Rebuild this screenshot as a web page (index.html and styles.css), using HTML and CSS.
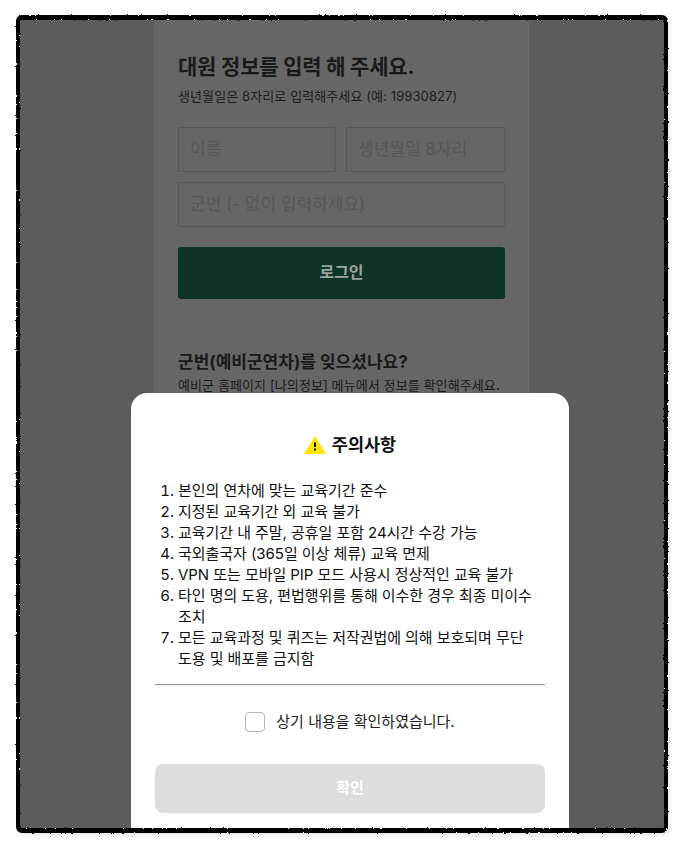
FILE: index.html
```html
<!DOCTYPE html>
<html lang="ko">
<head>
<meta charset="utf-8">
<title>대원 정보 입력</title>
<link rel="stylesheet" href="styles.css">
</head>
<body>
<svg class="defs" width="0" height="0" aria-hidden="true"><filter id="rough" x="-2%" y="-2%" width="104%" height="104%"><feTurbulence type="fractalNoise" baseFrequency="0.45" numOctaves="2" seed="4"/><feDisplacementMap in="SourceGraphic" scale="2.4"/></filter></svg>
<div class="frame">
  <div class="viewport">
    <div class="page">
      <main class="panel">
        <h1 class="title">대원 정보를 입력 해 주세요.</h1>
        <p class="sub">생년월일은 8자리로 입력해주세요 (예: 19930827)</p>
        <div class="row">
          <div class="field">이름</div>
          <div class="field">생년월일 8자리</div>
        </div>
        <div class="field wide">군번 (- 없이 입력하세요)</div>
        <div class="login">로그인</div>
        <h2 class="forgot">군번(예비군연차)를 잊으셨나요?</h2>
        <p class="sub small">예비군 홈페이지 [나의정보] 메뉴에서 정보를 확인해주세요.</p>
      </main>
    </div>
    <section class="modal">
      <h3 class="modal-title">
        <svg class="warn" width="22" height="18" viewBox="0 0 22 18"><path d="M11 0 22 18H0Z" fill="#ffe600"/><rect x="10" y="6.5" width="2" height="4.5" fill="#111"/><rect x="10" y="12.5" width="2" height="2" fill="#111"/></svg>
        <span>주의사항</span>
      </h3>
      <ol class="rules">
        <li>본인의 연차에 맞는 교육기간 준수</li>
        <li>지정된 교육기간 외 교육 불가</li>
        <li>교육기간 내 주말, 공휴일 포함 24시간 수강 가능</li>
        <li>국외출국자 (365일 이상 체류) 교육 면제</li>
        <li>VPN 또는 모바일 PIP 모드 사용시 정상적인 교육 불가</li>
        <li>타인 명의 도용, 편법행위를 통해 이수한 경우 최종 미이수 조치</li>
        <li>모든 교육과정 및 퀴즈는 저작권법에 의해 보호되며 무단 도용 및 배포를 금지함</li>
      </ol>
      <hr class="divider">
      <div class="check-row"><span class="check"></span><span>상기 내용을 확인하였습니다.</span></div>
      <div class="confirm">확인</div>
    </section>
  </div>
</div>
</body>
</html>
```
FILE: styles.css
```css
* { box-sizing: border-box; }
html, body { margin: 0; height: 100%; }
body {
  background: #fff;
  font-family: "Inter", "Noto Sans CJK KR", sans-serif;
  padding: 15px 15px 15px 16px;
  color: #111;
  overflow: hidden;
}
.defs { position: absolute; }
.frame {
  position: relative;
  width: 652px;
  height: 818px;
  padding: 5px 4px;
  box-shadow: 2px 3px 3px #eee;
  border-radius: 6px;
}
.frame::after {
  content: "";
  position: absolute;
  inset: 0;
  border: solid #000;
  border-width: 5px 4px;
  border-radius: 6px;
  filter: url(#rough);
  pointer-events: none;
}
.viewport {
  position: relative;
  height: 100%;
  overflow: hidden;
}
.page {
  height: 100%;
  background: #5c5c5c;
  display: flex;
  justify-content: center;
}
.panel {
  width: 375px;
  height: 100%;
  margin-left: -1px;
  background: #666;
  padding: 32px 24px 0;
  color: #1d1d1d;
}
.title { margin: 0; font-size: 21px; line-height: 29px; font-weight: 700; letter-spacing: -0.2px; color: #1a1a1a; }
.sub { margin: 6px 0 0; font-size: 13px; line-height: 19px; letter-spacing: 0.1px; color: #1c1c1c; }
.sub.small { margin-top: 1px; }
.row { display: grid; grid-template-columns: 158px 159px; gap: 10px; margin-top: 21px; }
.field {
  height: 45px;
  border: 1px solid #585858;
  border-radius: 2px;
  padding: 0 11px;
  font-size: 17px;
  line-height: 43px;
  color: #575757;
}
.field.wide { margin-top: 10px; }
.login {
  margin-top: 20px;
  height: 52px;
  background: #0d3426;
  border-radius: 3px;
  color: #9aa5a0;
  font-weight: 700;
  font-size: 16px;
  line-height: 51px;
  text-align: center;
}
.forgot { margin: 51px 0 0; font-size: 17px; line-height: 25px; font-weight: 700; color: #1a1a1a; }
.modal {
  position: absolute;
  left: 111px;
  width: 438px;
  bottom: 0;
  height: 435px;
  background: #fff;
  border-radius: 16px 16px 0 0;
  padding: 40px 24px 0;
}
.modal-title {
  margin: 0;
  display: flex;
  justify-content: center;
  align-items: center;
  gap: 6px;
  font-size: 17.5px;
  line-height: 24px;
  font-weight: 700;
  color: #111;
}
.rules {
  margin: 23px 0 0;
  padding: 0 0 0 23px;
  font-size: 15px;
  line-height: 21px;
  letter-spacing: -0.05px;
  word-break: keep-all;
  color: #111;
}
.divider {
  margin: 15px 0 0;
  border: 0;
  border-top: 1px solid #999;
  border-bottom: 1px solid #eee;
  height: 2px;
}
.check-row {
  margin-top: 26px;
  display: flex;
  justify-content: center;
  align-items: center;
  gap: 11px;
  font-size: 15px;
  line-height: 20px;
  color: #222;
}
.check {
  width: 20px;
  height: 20px;
  border: 1px solid #b5b5b5;
  border-radius: 4px;
}
.confirm {
  margin-top: 32px;
  height: 49px;
  background: #dcdde0;
  border-radius: 8px;
  color: #fff;
  font-weight: 700;
  font-size: 15px;
  line-height: 48px;
  text-align: center;
}
```
